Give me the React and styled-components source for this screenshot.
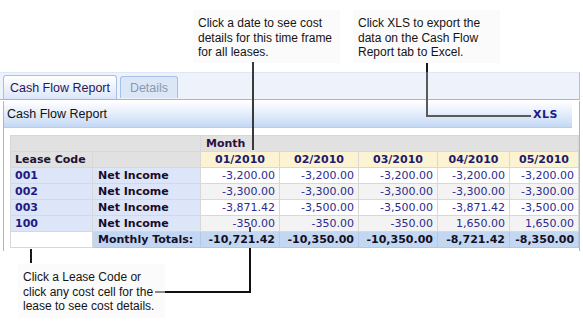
import React from "react";
import styled, { createGlobalStyle } from "styled-components";

const Global = createGlobalStyle`
  html, body { margin: 0; padding: 0; background: #fff; }
  body { font-family: "Liberation Sans", Arial, sans-serif; }
`;

const Page = styled.div`
  position: relative;
  width: 583px;
  height: 327px;
  overflow: hidden;
  background: #fff;
`;

const NoteRow = styled.div`
  display: flex;
  gap: 13px;
  height: 72px;
  box-sizing: border-box;
  padding: 10px 0 0 193px;
`;

const Note = styled.div`
  width: 147px;
  height: 53px;
  box-sizing: border-box;
  padding: 6px 5px;
  background: #fbfbfb;
  color: #141414;
  font-family: "Liberation Sans", Arial, sans-serif;
  font-size: 12px;
  line-height: 14.5px;
  white-space: nowrap;
`;

const BottomNote = styled(Note)`
  margin: 13px 0 0 18px;
  height: 54px;
`;

const TabStrip = styled.div`
  display: flex;
  align-items: flex-end;
  gap: 3px;
  width: 580px;
  height: 28px;
  box-sizing: border-box;
  padding-left: 3px;
  background: #eef3fb;
  border-top: 1px solid #dde7f5;
  border-right: 1px solid #a9c2e6;
  border-bottom: 1px solid #9ab8e4;
`;

const Tab = styled.div`
  width: ${p => p.$w}px;
  height: ${p => (p.$active ? "24px" : "22px")};
  box-sizing: border-box;
  display: flex;
  align-items: center;
  justify-content: center;
  border: 1px solid #a6c1e9;
  border-bottom: none;
  border-radius: 3px 3px 0 0;
  background: ${p => (p.$active ? "linear-gradient(#ffffff, #dbe7f8)" : "#dbe6f6")};
  color: ${p => (p.$active ? "#2c145c" : "#8a99b2")};
  font-size: 12.5px;
  margin-bottom: ${p => (p.$active ? "0" : "1px")};
`;

const Panel = styled.div`
  margin-left: 3px;
  width: 577px;
  height: 150px;
  box-sizing: border-box;
  border-left: 1px solid #a3b9d9;
  border-right: 1px solid #a8b8cc;
`;

const PanelBar = styled.div`
  display: flex;
  align-items: center;
  justify-content: space-between;
  height: 27px;
  box-sizing: border-box;
  margin: 1px 7px 0 0;
  padding: 0 14px 0 3px;
  background: linear-gradient(#ffffff 0%, #e6effb 45%, #c4d8f4 100%);
  border-bottom: 1px solid #b7cdec;
  color: #111;
  font-size: 12.5px;
`;

const Xls = styled.span`
  font-family: "DejaVu Sans", Verdana, sans-serif;
  font-size: 11px;
  font-weight: bold;
  letter-spacing: 0.5px;
  color: #1b1a8e;
`;

const Grid = styled.table`
  margin: 7px 0 0 6px;
  border-collapse: collapse;
  table-layout: fixed;
  width: 568px;
  border: 1px solid #a4a4a4;
  font-family: "DejaVu Sans", Verdana, sans-serif;
  font-size: 11px;
`;

const Col = styled.col`
  width: ${p => p.$w}px;
`;

const Row = styled.tr`
  height: 16px;
`;

const tones = {
  head: "#e1e1e1",
  date: "#fcf3d2",
  lease: "#dde6f9",
  even: "#ffffff",
  odd: "#f3f3f3",
  total: "#c3d7f3",
  blank: "#ffffff",
};

const Cell = styled.td`
  padding: 0 4px 0 ${p => p.$indent || 4}px;
  line-height: 15px;
  border: 1px solid ${p => (p.$tone === "total" ? "#b4c8e4" : "#d8d8d8")};
  background: ${p => tones[p.$tone]};
  color: ${p => p.$color || "#1a1036"};
  font-weight: ${p => (p.$bold ? "bold" : "normal")};
  text-align: ${p => p.$align || "left"};
  white-space: nowrap;
  overflow: hidden;
`;

const Leaders = styled.svg`
  position: absolute;
  left: 0;
  top: 0;
  pointer-events: none;
`;

const months = ["01/2010", "02/2010", "03/2010", "04/2010", "05/2010"];
const widths = [82, 108, 79, 79, 79, 72, 69];

const leases = [
  { code: "001", vals: ["-3,200.00", "-3,200.00", "-3,200.00", "-3,200.00", "-3,200.00"] },
  { code: "002", vals: ["-3,300.00", "-3,300.00", "-3,300.00", "-3,300.00", "-3,300.00"] },
  { code: "003", vals: ["-3,871.42", "-3,500.00", "-3,500.00", "-3,871.42", "-3,500.00"] },
  { code: "100", vals: ["-350.00", "-350.00", "-350.00", "1,650.00", "1,650.00"] },
];

const totals = ["-10,721.42", "-10,350.00", "-10,350.00", "-8,721.42", "-8,350.00"];

export default function App() {
  return (
    <Page>
      <Global />
      <NoteRow>
        <Note>
          Click a date to see cost<br />
          details for this time frame<br />
          for all leases.
        </Note>
        <Note>
          Click XLS to export the<br />
          data on the Cash Flow<br />
          Report tab to Excel.
        </Note>
      </NoteRow>

      <TabStrip>
        <Tab $active $w={114}>Cash Flow Report</Tab>
        <Tab $w={58}>Details</Tab>
      </TabStrip>

      <Panel>
        <PanelBar>
          <span>Cash Flow Report</span>
          <Xls>XLS</Xls>
        </PanelBar>
        <Grid>
          <colgroup>
            {widths.map((w, i) => <Col key={i} $w={w} />)}
          </colgroup>
          <tbody>
            <Row>
              <Cell $tone="head" colSpan={2} />
              <Cell $tone="head" colSpan={5} $bold $indent={5} $color="#2a0f3c">Month</Cell>
            </Row>
            <Row>
              <Cell $tone="head" $bold $color="#1c1430">Lease Code</Cell>
              <Cell $tone="head" />
              {months.map(m => (
                <Cell key={m} $tone="date" $bold $align="center" $color="#1d1a6c">{m}</Cell>
              ))}
            </Row>
            {leases.map((l, r) => (
              <Row key={l.code}>
                <Cell $tone="lease" $bold $color="#1d1b82">{l.code}</Cell>
                <Cell $tone="lease" $bold $indent={5} $color="#180d2c">Net Income</Cell>
                {l.vals.map((v, i) => (
                  <Cell key={i} $tone={r % 2 ? "odd" : "even"} $align="right" $color="#2c2a8e">{v}</Cell>
                ))}
              </Row>
            ))}
            <Row>
              <Cell $tone="blank" />
              <Cell $tone="total" $bold $indent={5} $color="#14102a">Monthly Totals:</Cell>
              {totals.map((v, i) => (
                <Cell key={i} $tone="total" $bold $align="right" $color="#12101e">{v}</Cell>
              ))}
            </Row>
          </tbody>
        </Grid>
      </Panel>

      <BottomNote>
        Click a Lease Code or<br />
        click any cost cell for the<br />
        lease to see cost details.
      </BottomNote>

      <Leaders width="583" height="327" viewBox="0 0 583 327" fill="none" strokeWidth="2">
        <path d="M253 62 V150" stroke="#3a3a3a" />
        <path d="M427 63 V72" stroke="#1a1a1a" />
        <path d="M427 72 V116 H531" stroke="#5a5a5a" />
        <path d="M31 249 V263" stroke="#1a1a1a" />
        <path d="M250 227 V232" stroke="#444" />
        <path d="M250 248 V292 H165" stroke="#111" />
        <path d="M155 292 H165" stroke="#8a8a8a" />
      </Leaders>
    </Page>
  );
}
